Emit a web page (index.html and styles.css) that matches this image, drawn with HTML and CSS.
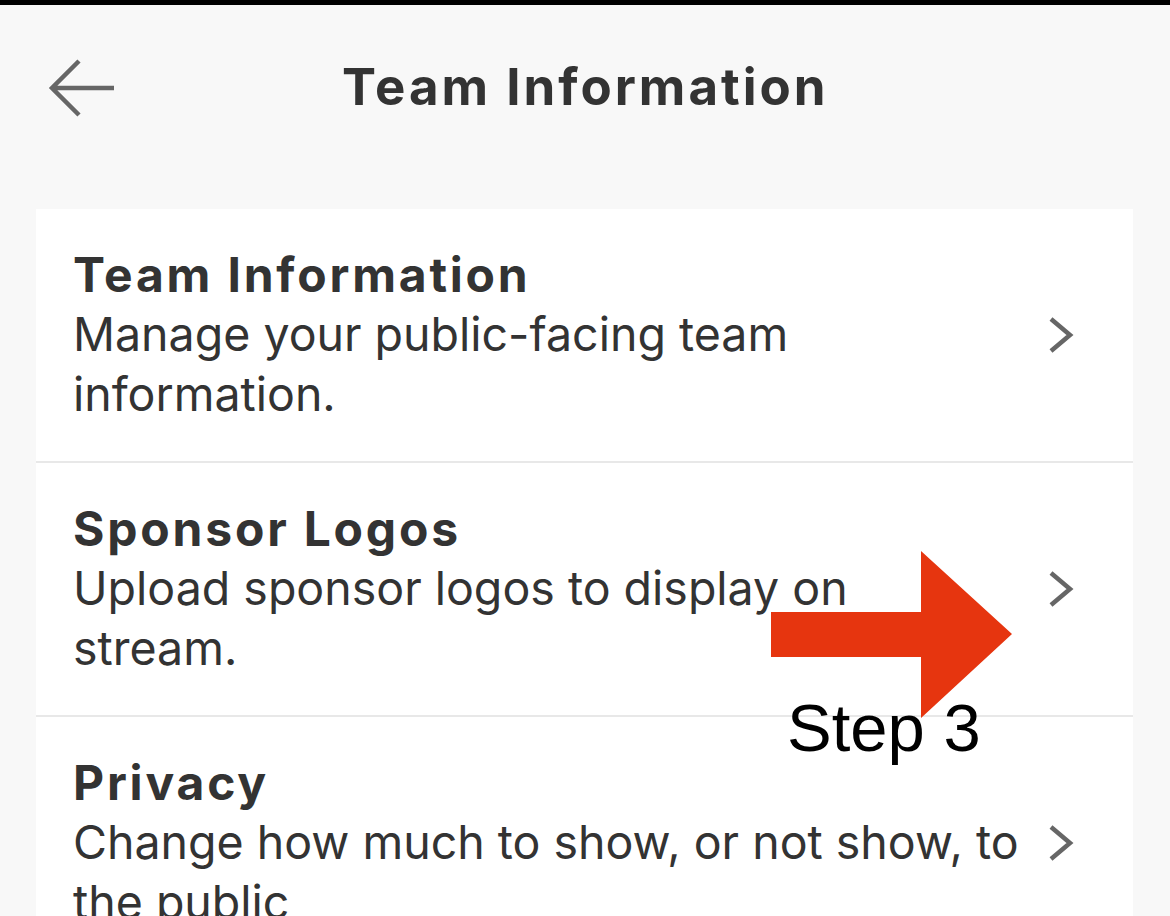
FILE: index.html
```html
<!DOCTYPE html>
<html lang="en">
<head>
<meta charset="utf-8">
<title>Team Information</title>
<link rel="stylesheet" href="styles.css">
</head>
<body>
<div class="page">
  <header class="topbar">
    <button class="back" aria-label="Back">
      <svg width="68" height="62" viewBox="0 0 68 62"><path d="M66 30 H4 M31 3 L4 30 L31 57" fill="none" stroke="#666" stroke-width="4.5"/></svg>
    </button>
    <h1 class="title">Team Information</h1>
  </header>
  <main class="card">
    <div class="row">
      <div class="text">
        <div class="row-title">Team Information</div>
        <div class="row-desc">Manage your public-facing team information.</div>
      </div>
      <svg class="chev" width="27" height="38" viewBox="0 0 27 38"><path d="M3 3 L22 19 L3 35" fill="none" stroke="#666" stroke-width="4.5"/></svg>
    </div>
    <div class="row">
      <div class="text">
        <div class="row-title">Sponsor Logos</div>
        <div class="row-desc">Upload sponsor logos to display on stream.</div>
      </div>
      <svg class="chev" width="27" height="38" viewBox="0 0 27 38"><path d="M3 3 L22 19 L3 35" fill="none" stroke="#666" stroke-width="4.5"/></svg>
    </div>
    <div class="row">
      <div class="text">
        <div class="row-title">Privacy</div>
        <div class="row-desc">Change how much to show, or not show, to the public</div>
      </div>
      <svg class="chev" width="27" height="38" viewBox="0 0 27 38"><path d="M3 3 L22 19 L3 35" fill="none" stroke="#666" stroke-width="4.5"/></svg>
    </div>
  </main>
  <div class="annotation">
    <svg width="244" height="170" viewBox="0 0 244 170"><polygon points="0,61 150,61 150,0 241,83 150,167 150,106 0,106" fill="#e6350f"/></svg>
    <div class="step">Step 3</div>
  </div>
</div>
</body>
</html>
```

FILE: styles.css
```css
html, body {
  margin: 0;
  padding: 0;
}
body {
  background: #f8f8f8;
  font-family: Inter, "Noto Sans", sans-serif;
  color: #333;
  height: 916px;
  overflow: hidden;
}
.page {
  position: relative;
  border-top: 5px solid #000;
  height: 911px;
}
.topbar {
  display: flex;
  align-items: center;
  height: 167px;
  padding: 0 0 0 48px;
  position: relative;
}
.back {
  background: none;
  border: 0;
  padding: 0;
  display: flex;
  margin-top: 0;
}
.title {
  margin: -4px 0 0 226px;
  font-size: 51px;
  font-weight: 700;
  letter-spacing: 3px;
  color: #333;
}
.card {
  margin: 37px 37px 0 36px;
  background: #fff;
}
.row {
  display: flex;
  align-items: center;
  justify-content: space-between;
  padding: 37px 58px 37px 37px;
  border-bottom: 2px solid #e8e8e8;
}
.text {
  width: 946px;
}
.row-title {
  font-size: 48px;
  font-weight: 700;
  letter-spacing: 2.8px;
  line-height: 58px;
}
.row-desc {
  font-size: 46.5px;
  line-height: 60px;
  font-weight: 400;
}
.chev {
  flex: none;
}
.annotation {
  position: absolute;
  left: 771px;
  top: 546px;
}
.annotation svg {
  display: block;
}
.step {
  position: absolute;
  left: 16px;
  top: 138px;
  font-family: "Liberation Sans", Arial, sans-serif;
  font-size: 67px;
  color: #000;
  white-space: nowrap;
}
```
